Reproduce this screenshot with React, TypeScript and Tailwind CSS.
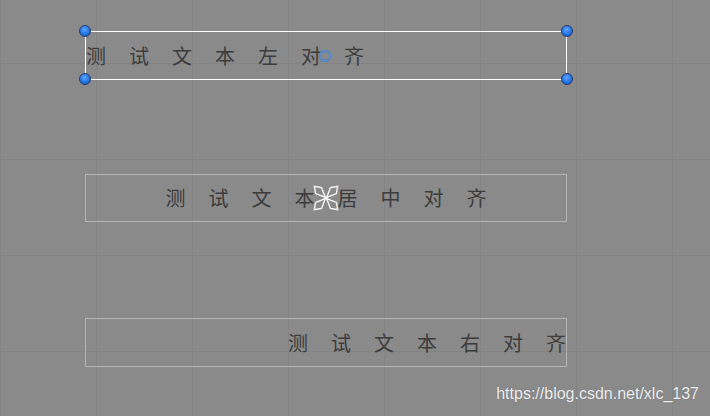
import React from "react";

const cjk = { fontFamily: '"Noto Sans CJK SC", "Noto Sans", sans-serif' };

function Handle({ pos }: { pos: string }) {
  return (
    <div
      className={`absolute ${pos} h-[12px] w-[12px] rounded-full border border-[#1d3d73] bg-[radial-gradient(circle_at_45%_35%,#5fa8ff_0%,#1f6fe0_60%,#1a55b8_100%)]`}
    />
  );
}

function MoveIcon() {
  const petal = "0,-1 4.2,-10.5 0,-16.5 -4.2,-10.5";
  return (
    <svg width="28" height="28" viewBox="-14 -14 28 28" className="absolute left-[226px] top-[9px]">
      {[45, 135, 225, 315].map((a) => (
        <polygon
          key={a}
          points={petal}
          transform={`rotate(${a})`}
          fill="none"
          stroke="#ffffff"
          strokeWidth="1.3"
          strokeLinejoin="miter"
        />
      ))}
    </svg>
  );
}

function PivotIcon() {
  return (
    <svg width="14" height="14" viewBox="0 0 14 14" className="absolute left-[232px] top-[17px]">
      <circle cx="7" cy="7" r="5" fill="none" stroke="#4a7ec2" strokeWidth="2.4" />
      <circle cx="7" cy="7" r="5" fill="none" stroke="#7aa6dc" strokeWidth="0.6" />
    </svg>
  );
}

export default function App() {
  return (
    <div className="relative h-[416px] w-[710px] overflow-hidden bg-[#8a8a8a] bg-[linear-gradient(to_right,#838383_1px,transparent_1px),linear-gradient(to_bottom,#838383_1px,transparent_1px)] bg-[size:96px_96px] bg-[position:0_63px]">
      <div className="flex flex-col pl-[85px] pt-[31px]">
        {/* Box 1: left aligned, selected */}
        <div className="relative flex h-[49px] w-[482px] items-center border border-white">
          <span
            className="whitespace-nowrap text-[20px] leading-none tracking-[23px] text-[#3c3c3c]"
            style={cjk}
          >
            测试文本左对齐
          </span>
          <PivotIcon />
          <Handle pos="left-[-7px] top-[-7px]" />
          <Handle pos="right-[-7px] top-[-7px]" />
          <Handle pos="left-[-7px] bottom-[-6px]" />
          <Handle pos="right-[-7px] bottom-[-6px]" />
        </div>

        {/* Box 2: centered */}
        <div className="relative mt-[94px] flex h-[48px] w-[482px] items-center justify-center border border-[#b4b4b4]">
          <span
            className="mr-[-23px] whitespace-nowrap text-[20px] leading-none tracking-[23px] text-[#3c3c3c]"
            style={cjk}
          >
            测试文本居中对齐
          </span>
          <MoveIcon />
        </div>

        {/* Box 3: right aligned */}
        <div className="relative mt-[96px] flex h-[49px] w-[482px] items-center justify-end border border-[#b4b4b4]">
          <span
            className="mr-[-23px] whitespace-nowrap text-[20px] leading-none tracking-[23px] text-[#3c3c3c]"
            style={cjk}
          >
            测试文本右对齐
          </span>
        </div>
      </div>

      <div
        className="absolute right-[11px] top-[386px] text-[16px] leading-none text-[#eeeeee] [text-shadow:0_0_1px_rgba(0,0,0,0.25)]"
        style={{ fontFamily: '"Liberation Sans", Arial, sans-serif' }}
      >
        https://blog.csdn.net/xlc_137
      </div>
    </div>
  );
}
